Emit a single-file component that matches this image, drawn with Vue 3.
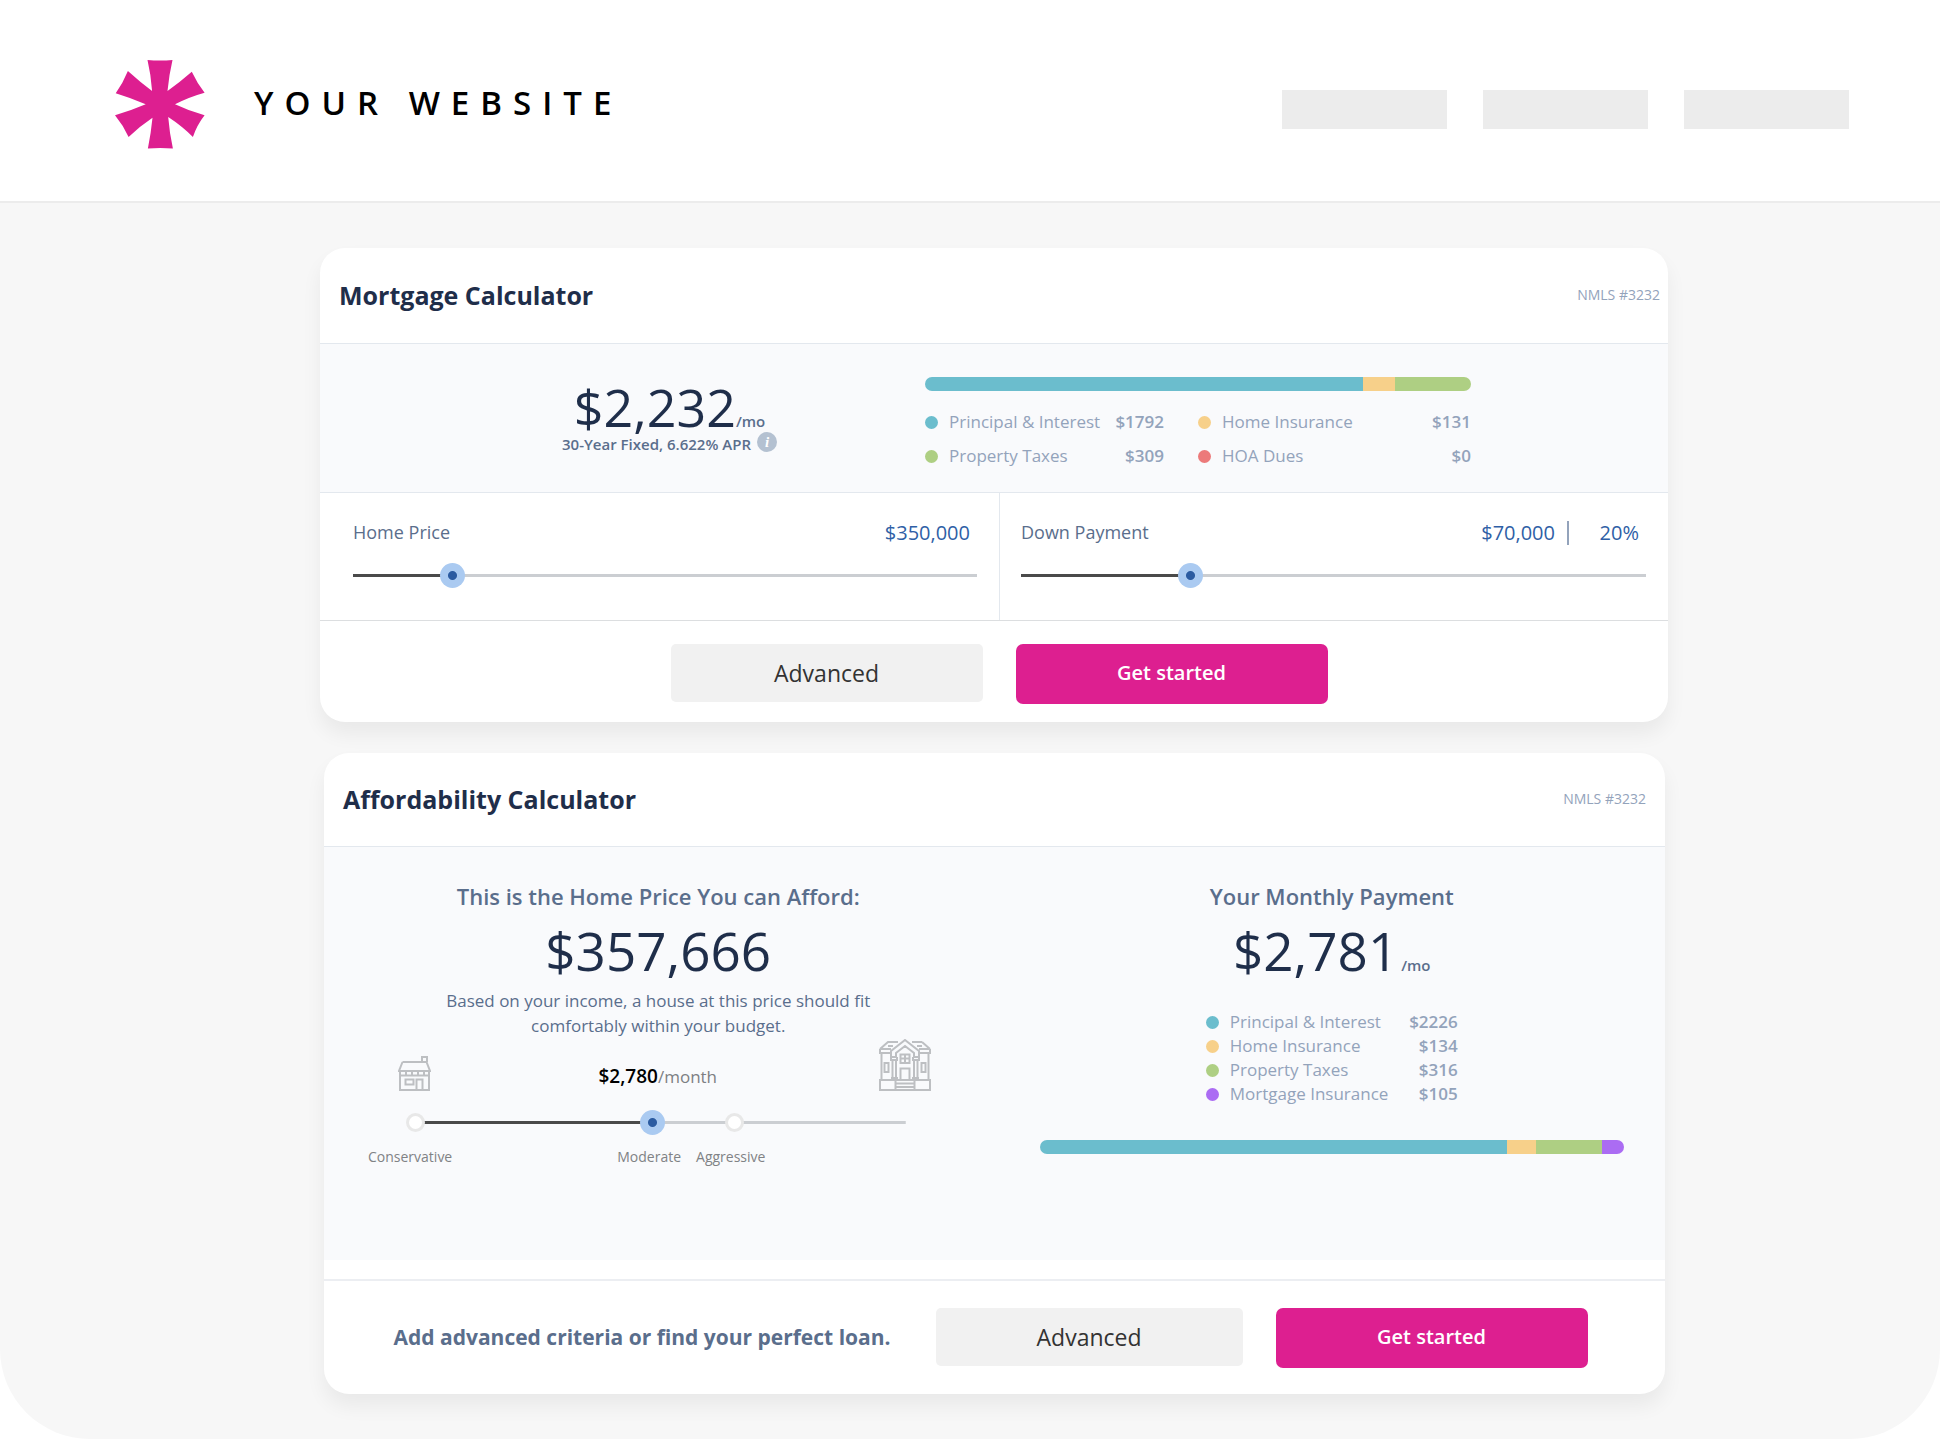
<script setup>
import { ref, computed } from 'vue'

const colors = {
  teal: '#6bbdcd',
  amber: '#f7d08a',
  green: '#aecf83',
  red: '#ec7a7a',
  purple: '#ab6cf3',
}

const navItems = ['Home', 'Products', 'Contact']

const homePrice = ref(350000)
const downPayment = ref(70000)
const comfort = ref(483)

const maxPrice = 2400000
const maxDown = 267000
const maxComfort = 1000

const usd = (n) => '$' + Number(n).toLocaleString('en-US')
const downPercent = computed(() => Math.round((downPayment.value / homePrice.value) * 100) + '%')

const mortgageParts = [
  { label: 'Principal & Interest', amount: 1792, color: colors.teal },
  { label: 'Home Insurance', amount: 131, color: colors.amber },
  { label: 'Property Taxes', amount: 309, color: colors.green },
  { label: 'HOA Dues', amount: 0, color: colors.red },
]

const affordParts = [
  { label: 'Principal & Interest', amount: 2226, color: colors.teal },
  { label: 'Home Insurance', amount: 134, color: colors.amber },
  { label: 'Property Taxes', amount: 316, color: colors.green },
  { label: 'Mortgage Insurance', amount: 105, color: colors.purple },
]

const share = (parts, part) => {
  const total = parts.reduce((sum, p) => sum + p.amount, 0)
  return (part.amount / total) * 100 + '%'
}

const fill = (value, max) => ({ '--fill': (value / max) * 100 + '%' })
</script>

<template>
  <div class="page">
    <header class="site-header">
      <a class="brand" href="#">
        <svg class="brand-mark" viewBox="0 0 90 89" aria-hidden="true">
          <path
            d="M32.5 0Q45 1 57.5 0Q54 15 52.5 31Q65 22 76.8 11.7Q82 23 89.6 32.7Q74 37 60 44.3Q74 51 89.6 55.3Q82 65 77.9 77Q67 66 53.2 57Q54.5 73 57.9 88.5Q45 87.5 32.9 88.5Q36 73 37.5 57.7Q25 66 13.6 77Q8 65 0 55.3Q15 51 30.7 44.3Q16 38 .7 33.3Q8 23 12.9 11Q25 22 37.1 31Q36 15 32.5 0Z"
          />
        </svg>
        <span class="brand-name">YOUR WEBSITE</span>
      </a>
      <nav class="site-nav">
        <a v-for="item in navItems" :key="item" class="nav-block" href="#" :aria-label="item"></a>
      </nav>
    </header>

    <main class="content">
      <section class="card">
        <div class="card-head">
          <h2 class="card-title">Mortgage Calculator</h2>
          <span class="nmls">NMLS #3232</span>
        </div>

        <div class="summary">
          <div class="quote">
            <p class="amount">$2,232<span class="per">/mo</span></p>
            <p class="terms">
              <span>30-Year Fixed, 6.622% APR</span>
              <button class="info" type="button" aria-label="Rate details">i</button>
            </p>
          </div>
          <div class="breakdown">
            <div class="bar">
              <span
                v-for="p in mortgageParts"
                :key="p.label"
                :style="{ width: share(mortgageParts, p), background: p.color }"
              ></span>
            </div>
            <ul class="legend two-col">
              <li v-for="p in mortgageParts" :key="p.label">
                <i class="dot" :style="{ background: p.color }"></i>
                <span>{{ p.label }}</span>
                <b>${{ p.amount }}</b>
              </li>
            </ul>
          </div>
        </div>

        <div class="fields">
          <div class="field">
            <div class="field-row">
              <label for="home-price">Home Price</label>
              <input class="value" type="text" aria-label="Home price amount" :value="usd(homePrice)" />
            </div>
            <input
              id="home-price"
              v-model.number="homePrice"
              class="slider"
              type="range"
              min="0"
              :max="maxPrice"
              step="1000"
              :style="fill(homePrice, maxPrice)"
            />
          </div>
          <div class="field">
            <div class="field-row">
              <label for="down-payment">Down Payment</label>
              <div class="pair">
                <input class="value" type="text" aria-label="Down payment amount" :value="usd(downPayment)" />
                <input class="value percent" type="text" aria-label="Down payment percent" :value="downPercent" />
              </div>
            </div>
            <input
              id="down-payment"
              v-model.number="downPayment"
              class="slider"
              type="range"
              min="0"
              :max="maxDown"
              step="1000"
              :style="fill(downPayment, maxDown)"
            />
          </div>
        </div>

        <div class="actions">
          <button class="btn plain" type="button">Advanced</button>
          <button class="btn primary" type="button">Get started</button>
        </div>
      </section>

      <section class="card afford">
        <div class="card-head">
          <h2 class="card-title">Affordability Calculator</h2>
          <span class="nmls">NMLS #3232</span>
        </div>

        <div class="afford-body">
          <div class="afford-col">
            <h3 class="lead">This is the Home Price You can Afford:</h3>
            <p class="amount large">$357,666</p>
            <p class="note">Based on your income, a house at this price should fit comfortably within your budget.</p>

            <div class="scale">
              <div class="scale-head">
                <svg class="house" viewBox="0 0 33 35" aria-hidden="true">
                  <path d="M4.5 6H24V1h5v5M4.5 6L1 15h31L28.5 6H24M2 15v19h29V15M2 19.5h29M8 15v4.5M14 15v4.5M20 15v4.5M26 15v4.5M7.5 23.5h8v5h-8zM18.5 34V23.5h6V34M24.5 23.5V34" />
                </svg>
                <p class="monthly"><b>$2,780</b>/month</p>
                <svg class="mansion" viewBox="0 0 52 52" aria-hidden="true">
                  <path d="M1 10L9 3H19M43 3H33M43 3L51 10M1 10H12M40 10H51M1 10v4h11M51 10v4H40M2.5 14v27M49.5 14v27M9 7h5M43 7h-5M12 18V12L26 1 40 12v6M12 18h5v-4l9-7 9 7v4h5M12 18v3h6v-3M34 18v3h6v-3M13.5 21v18M17 21v18M35 21v18M38.5 21v18M12 39h6v2M34 41v-2h6M21.5 15.5h9v8.5h-9zM26 15.5V24M21.5 19.5h9M5.5 24h4v9h-4zM42.5 24h4v9h-4zM21.5 41V29.5h9V41M1 41h15.5v10H1zM35.5 41H51v10H35.5zM16.5 41h19M16.5 44.5h19M16.5 48h19M16.5 51h19" />
                </svg>
              </div>
              <div class="scale-track">
                <input
                  v-model.number="comfort"
                  class="slider"
                  type="range"
                  min="0"
                  :max="maxComfort"
                  aria-label="Budget comfort"
                  :style="fill(comfort, maxComfort)"
                />
                <i class="stop first"></i>
                <i class="stop second"></i>
              </div>
              <div class="scale-labels">
                <span>Conservative</span>
                <span class="moderate">Moderate</span>
                <span>Aggressive</span>
              </div>
            </div>
          </div>

          <div class="afford-col payment">
            <h3 class="lead">Your Monthly Payment</h3>
            <p class="amount large">$2,781<span class="per">/mo</span></p>
            <ul class="legend stacked">
              <li v-for="p in affordParts" :key="p.label">
                <i class="dot" :style="{ background: p.color }"></i>
                <span>{{ p.label }}</span>
                <b>${{ p.amount }}</b>
              </li>
            </ul>
            <div class="bar">
              <span
                v-for="p in affordParts"
                :key="p.label"
                :style="{ width: share(affordParts, p), background: p.color }"
              ></span>
            </div>
          </div>
        </div>

        <div class="actions">
          <p class="prompt">Add advanced criteria or find your perfect loan.</p>
          <button class="btn plain" type="button">Advanced</button>
          <button class="btn primary" type="button">Get started</button>
        </div>
      </section>
    </main>
  </div>
</template>

<style>
body {
  margin: 0;
  background: #fff;
}
</style>

<style scoped>
.page {
  box-sizing: border-box;
  min-height: 100vh;
  background: #f7f7f7;
  border-radius: 0 0 90px 90px;
  font-family: 'Open Sans', 'Noto Sans', sans-serif;
  color: #1f2e4a;
}
h2, h3, p, ul {
  margin: 0;
  padding: 0;
}
button, input {
  font-family: inherit;
}

.site-header {
  display: flex;
  align-items: center;
  justify-content: space-between;
  height: 201px;
  padding: 0 91px 0 115px;
  background: #fff;
  border-bottom: 2px solid #ececec;
}
.brand {
  display: flex;
  align-items: center;
  gap: 49px;
  margin-top: 7px;
  color: #000;
  text-decoration: none;
}
.brand-mark {
  width: 90px;
  height: 89px;
  fill: #dd1f90;
}
.brand-name {
  padding-bottom: 2px;
  font-size: 33px;
  line-height: 44px;
  font-weight: 600;
  letter-spacing: 11px;
}
.site-nav {
  display: flex;
  gap: 36px;
  margin-top: 18px;
}
.nav-block {
  width: 165px;
  height: 39px;
  background: #ececec;
}

.content {
  padding: 45px 272px 45px 320px;
}
.card {
  overflow: hidden;
  background: #fff;
  border-radius: 25px;
  box-shadow: 0 12px 20px rgba(0, 0, 0, 0.06);
}
.card-head {
  box-sizing: border-box;
  display: flex;
  align-items: center;
  justify-content: space-between;
  height: 96px;
  padding: 0 8px 2px 19px;
  border-bottom: 1px solid #e3e8ee;
}
.card-title {
  font-size: 25px;
  line-height: 36px;
  font-weight: 700;
}
.nmls {
  font-size: 14px;
  color: #93a3bb;
}

.summary {
  display: flex;
  height: 148px;
  background: #f9fafc;
  border-bottom: 1px solid #e3e8ee;
}
.quote, .breakdown {
  box-sizing: border-box;
}
.quote {
  display: flex;
  flex-direction: column;
  align-items: center;
  width: 605px;
  padding: 43px 0 0 94px;
}
.amount {
  font-size: 52px;
  line-height: 40px;
  white-space: nowrap;
}
.per {
  font-size: 15px;
  font-weight: 600;
  color: #5a6e8c;
}
.terms {
  display: flex;
  gap: 6px;
  margin-top: -7px;
  font-size: 15px;
  line-height: 20px;
  font-weight: 600;
  color: #5a6e8c;
  white-space: nowrap;
}
.info {
  width: 20px;
  height: 20px;
  margin-top: -2px;
  padding: 0;
  border: 0;
  border-radius: 50%;
  background: #b4c1d1;
  color: #fff;
  font: italic bold 15px/20px 'Liberation Serif', serif;
}
.breakdown {
  width: 546px;
  padding-top: 33px;
}
.bar {
  display: flex;
  height: 14px;
  overflow: hidden;
  border-radius: 7px;
}
.legend {
  list-style: none;
  font-size: 17px;
  line-height: 24px;
  color: #93a3bb;
}
.legend li {
  display: flex;
  align-items: center;
  white-space: nowrap;
}
.legend b {
  margin-left: auto;
  font-weight: 600;
}
.dot {
  width: 13px;
  height: 13px;
  margin-right: 11px;
  border-radius: 50%;
}
.two-col {
  display: grid;
  grid-template-columns: 239px 1fr;
  gap: 10px 34px;
  margin-top: 19px;
}

.fields {
  display: grid;
  grid-template-columns: 679px 1fr;
  height: 127px;
  border-bottom: 1px solid #dcdee0;
}
.field {
  padding: 26px 22px 0 33px;
}
.field + .field {
  padding-left: 21px;
  border-left: 1px solid #e3e8ee;
}
.field-row {
  display: flex;
  justify-content: space-between;
  height: 28px;
  padding-right: 7px;
  font-size: 18px;
  line-height: 26px;
  color: #5a6e8c;
}
.value {
  width: 100px;
  height: 28px;
  padding: 0;
  border: 0;
  background: none;
  color: #2f5fa6;
  font-size: 20px;
  line-height: 28px;
  text-align: right;
}
.pair {
  display: flex;
  gap: 12px;
}
.percent {
  width: 70px;
  height: 24px;
  margin-top: 2px;
  border-left: 2px solid #93a3bb;
}
.slider {
  display: block;
  appearance: none;
  width: 100%;
  height: 25px;
  margin: 16px 0 0;
  background: linear-gradient(to right, #4a4a4a var(--fill), #cbced2 var(--fill)) center / 100% 3px no-repeat;
}
.slider::-webkit-slider-thumb {
  appearance: none;
  width: 25px;
  height: 25px;
  border-radius: 50%;
  background: radial-gradient(circle, #2b5ba1 4px, #aacaf1 5px);
}

.actions {
  display: flex;
  justify-content: center;
  gap: 33px;
  height: 78px;
  padding: 23px 0 0 10px;
}
.btn {
  width: 312px;
  padding: 0;
  border: 0;
}
.plain {
  height: 58px;
  border-radius: 5px;
  background: #f1f1f1;
  color: #333;
  font-size: 23px;
}
.primary {
  height: 60px;
  padding-bottom: 4px;
  border-radius: 7px;
  background: #dd1f90;
  color: #fff;
  font-size: 20px;
  font-weight: 600;
}

.afford {
  margin: 31px 3px 0 4px;
}
.afford .card-head {
  height: 94px;
  padding-right: 19px;
}
.afford-body {
  display: grid;
  grid-template-columns: 1fr 1fr;
  height: 413px;
  background: #f9fafc;
}
.afford-col {
  padding: 34px 42px 0 40px;
  text-align: center;
}
.lead {
  font-size: 22px;
  line-height: 30px;
  font-weight: 600;
  color: #5a6e8c;
}
.large {
  margin-top: 3px;
  font-size: 53px;
  line-height: 74px;
}
.note {
  max-width: 430px;
  margin: 0 auto 1px;
  font-size: 17px;
  line-height: 25px;
  color: #5a6e8c;
}
.scale-head {
  display: flex;
  align-items: flex-end;
  justify-content: space-between;
  padding-left: 34px;
  margin-right: 22px;
}
.house, .mansion {
  fill: none;
  stroke: #bdbfc2;
  stroke-width: 2;
}
.house {
  width: 33px;
  height: 35px;
}
.mansion {
  width: 52px;
  height: 52px;
}
.monthly {
  margin-left: 6px;
  font-size: 17px;
  line-height: 28px;
  color: #7d7f83;
}
.monthly b {
  font-size: 19px;
  font-weight: 600;
  color: #000;
}
.scale-track {
  position: relative;
  margin: 19px 47px 0 51px;
}
.scale-track .slider {
  margin: 0;
}
.stop {
  position: absolute;
  top: 3px;
  box-sizing: border-box;
  width: 19px;
  height: 19px;
  margin-left: -9px;
  border: 3px solid #e8e8e8;
  border-radius: 50%;
  background: #fff;
}
.first {
  left: 0;
}
.second {
  left: 65%;
}
.scale-labels {
  display: flex;
  padding-left: 4px;
  margin-top: 12px;
  font-size: 14px;
  line-height: 20px;
  color: #808285;
}
.moderate {
  margin: 0 15px 0 165px;
}
.payment {
  padding: 34px 41px 0 45px;
}
.payment .per {
  margin-left: 3px;
}
.stacked {
  width: 252px;
  margin: 8px auto 0;
}
.payment .bar {
  margin-top: 34px;
}
.afford .actions {
  align-items: flex-start;
  height: 86px;
  margin-top: 19px;
  padding: 27px 8px 0 0;
  border-top: 2px solid #eceef2;
}
.afford .plain {
  width: 307px;
}
.prompt {
  margin: 14px 12px 0 0;
  font-size: 21px;
  line-height: 30px;
  font-weight: 700;
  color: #5a6e8c;
}
</style>
